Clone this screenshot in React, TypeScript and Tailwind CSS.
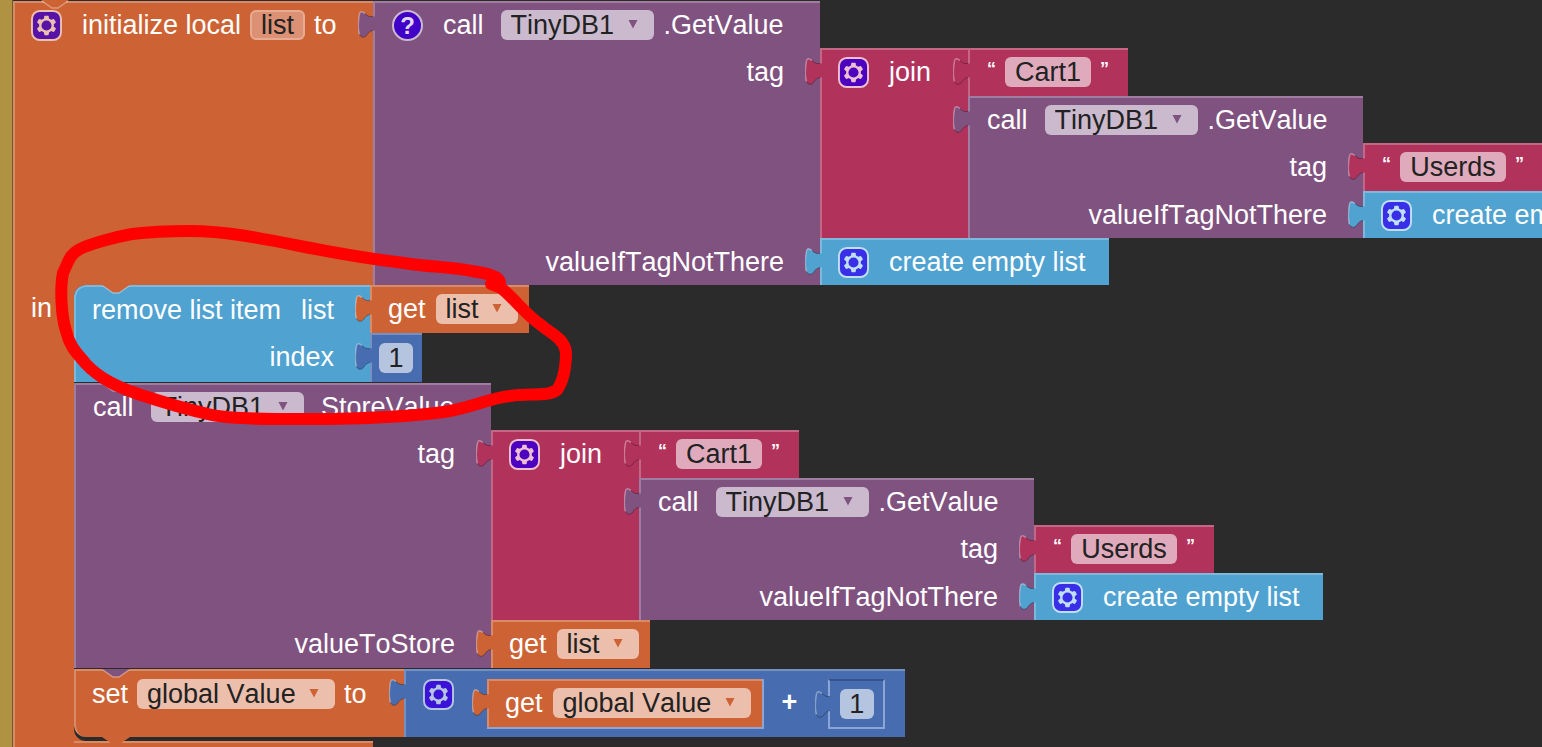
import React from "react";
import clsx from "clsx";

const GEAR =
  "m4.203,7.296 0,1.368 -0.92,0.677 -0.11,0.41 0.9,1.479 0.41,0.11 1.043,-0.457 1.187,0.683 0.127,1.134 0.3,0.3 1.71,0 0.3,-0.299 0.127,-1.138 1.185,-0.682 1.046,0.458 0.409,-0.11 0.9,-1.479 -0.11,-0.41 -0.92,-0.677 0,-1.366 0.92,-0.677 0.11,-0.41 -0.9,-1.479 -0.409,-0.109 -1.046,0.458 -1.185,-0.682 -0.127,-1.138 -0.3,-0.299 -1.71,0 -0.3,0.3 -0.126,1.135 -1.187,0.682 -1.043,-0.457 -0.41,0.11 -0.899,1.479 0.11,0.409z";

// Plug on the left side of a value block
const Tab = ({ className }: { className: string }) => (
  <svg
    viewBox="0 0 17 28"
    className={clsx("absolute top-[9px] -left-[15px] z-10 h-7 w-[17px]", className)}
  >
    <path
      d="M17 6.500H15C10 7 9 5 7 3.500C4 1 2 1 1.500 4C0 12 0 20 1.500 24.500C3 28 6 28 8.500 25.500C11 22 12 21 15 20.500H17z"
      fill="currentColor"
    />
    <path
      d="M7 3.500C4 1 2 1 1.500 4C0 12 0 20 1.500 24.500"
      fill="none"
      stroke="white"
      strokeOpacity="0.35"
      strokeWidth="1.500"
    />
    <path
      d="M1.500 24.500C3 28 6 28 8.500 25.500C11 22 12 21 15 20.500M7 3.500C9 5 10 7 15 6.500"
      fill="none"
      stroke="black"
      strokeOpacity="0.3"
    />
  </svg>
);

// Bump of the statement above, which fits in the top edge of a block
const Notch = ({ className }: { className: string }) => (
  <svg viewBox="0 0 28 9" className={clsx("absolute top-0 left-7 z-10 h-[9px] w-7", className)}>
    <path d="M0 0l11 7.500h6L28 0z" fill="currentColor" />
    <path
      d="M1 1l10 7h6l10-7"
      fill="none"
      stroke="white"
      strokeOpacity="0.35"
      strokeWidth="1.500"
    />
  </svg>
);

const Gear = ({ className, tint }: { className: string; tint: string }) => (
  <button aria-label="Edit block" className={clsx("h-[31px] w-[31px] shrink-0", tint)}>
    <svg viewBox="0 0 16 16" className="h-full w-full">
      <rect
        x="0.5"
        y="0.5"
        width="15"
        height="15"
        rx="4"
        className={className}
        stroke="currentColor"
        strokeWidth="1"
      />
      <path d={GEAR} fill="currentColor" />
      <circle cx="8" cy="8" r="2.600" className={className} />
    </svg>
  </button>
);

const Dropdown = ({
  value,
  className,
  arrow,
}: {
  value: string;
  className: string;
  arrow: string;
}) => (
  <div className="relative">
    <select
      aria-label={value}
      className={clsx(
        "block h-[30px] appearance-none rounded-md pl-[10px] leading-[30px] text-[#222]",
        className
      )}
    >
      <option>{value}</option>
    </select>
    <svg
      viewBox="0 0 10 9"
      className={clsx("pointer-events-none absolute top-[10px] right-4 h-[9px] w-[10px]", arrow)}
    >
      <path d="M0.500 0h9L5 8.500z" fill="currentColor" />
    </svg>
  </div>
);

const TextField = ({
  value,
  label,
  className,
}: {
  value: string;
  label: string;
  className: string;
}) => (
  <input
    aria-label={label}
    defaultValue={value}
    className={clsx("h-[30px] rounded-md text-center leading-[30px] text-[#222]", className)}
  />
);

const Text = ({ value, width }: { value: string; width: string }) => (
  <div className="relative flex h-12 w-max items-center gap-[9px] bg-[#b1335c] px-[19px] shadow-[inset_2px_2px_0_#ffffff40]">
    <Tab className="text-[#b1335c]" />
    <span className="pb-[6px] text-lg font-bold">“</span>
    <TextField value={value} label="text" className={clsx("bg-[#e0aabd]", width)} />
    <span className="pb-[6px] text-lg font-bold">”</span>
  </div>
);

const EmptyList = () => (
  <div className="relative flex h-[47px] w-[289px] items-center gap-5 bg-[#50a2d1] pt-px pl-[18px] whitespace-nowrap shadow-[inset_2px_2px_0_#ffffff40]">
    <Tab className="text-[#50a2d1]" />
    <Gear className="fill-[#3a2fe8]" tint="text-[#bfe0f2]" />
    <span>create empty list</span>
  </div>
);

const GetVar = ({ name, width }: { name: string; width: string }) => (
  <div className="relative flex h-12 w-max items-center gap-[10px] bg-[#cd6335] pr-[11px] pl-[18px] shadow-[inset_2px_2px_0_#ffffff40]">
    <Tab className="text-[#cd6335]" />
    <span>get</span>
    <Dropdown value={name} className={clsx("bg-[#ebbfac]", width)} arrow="text-[#cd6335]" />
  </div>
);

const Join = ({ children }: { children: React.ReactNode }) => (
  <div className="relative flex">
    <Tab className="text-[#b1335c]" />
    <div className="w-[148px] border-t-2 border-l-2 border-white/25 bg-[#b1335c] pl-4">
      <div className="flex h-11 items-center gap-5">
        <Gear className="fill-[#4d00bf]" tint="text-[#ecc0d0]" />
        <span>join</span>
      </div>
    </div>
    <div>{children}</div>
  </div>
);

type CallProps = {
  method: string;
  width: string;
  help?: boolean;
  tab?: boolean;
  inputs: { label: string; block: React.ReactNode }[];
};

const Call = ({ method, width, help, tab, inputs }: CallProps) => (
  <div className="relative">
    {tab && <Tab className="text-[#7f5280]" />}
    <div
      className={clsx(
        "flex h-[47px] items-center border-t-2 border-l-2 border-white/25 bg-[#7f5280] pb-px pl-[17px]",
        width
      )}
    >
      {help && (
        <button
          aria-label="Help"
          className="mr-5 h-[31px] w-[31px] rounded-full border-2 border-[#cbbacd] bg-[#4000c8] text-2xl leading-[27px] font-bold text-[#e0d8f0]"
        >
          ?
        </button>
      )}
      <span className="mr-[17px]">call</span>
      <Dropdown value="TinyDB1" className="w-[153px] bg-[#cbbacd]" arrow="text-[#7f5280]" />
      <span className="ml-[10px]">.{method}</span>
    </div>
    {inputs.map((input) => (
      <div key={input.label} className="flex">
        <div
          className={clsx(
            "shrink-0 border-l-2 border-white/25 bg-[#7f5280] pt-[2px] pr-[36px] text-right leading-[45px]",
            width
          )}
        >
          {input.label}
        </div>
        {input.block}
      </div>
    ))}
  </div>
);

const CartTag = () => (
  <Join>
    <Text value="Cart1" width="w-[86px]" />
    <Call
      tab
      method="GetValue"
      width="w-[395px]"
      inputs={[
        { label: "tag", block: <Text value="Userds" width="w-[106px]" /> },
        { label: "valueIfTagNotThere", block: <EmptyList /> },
      ]}
    />
  </Join>
);

const RemoveItem = () => (
  <div className="relative flex">
    <Notch className="text-[#cd6335]" />
    <div className="w-[296px] rounded-tl-xl border-t-2 border-l-2 border-white/25 bg-[#50a2d1] pr-[36px] pl-4 text-right">
      <p className="flex justify-between leading-[46px]">
        <span>remove list item</span>
        <span>list</span>
      </p>
      <p className="leading-[48px]">index</p>
    </div>
    <div>
      <GetVar name="list" width="w-[82px]" />
      <div className="relative flex h-[49px] w-[52px] items-center justify-center bg-[#476db0] shadow-[inset_2px_2px_0_#ffffff40]">
        <Tab className="text-[#476db0]" />
        <TextField value="1" label="index" className="w-[34px] bg-[#b5c5e0]" />
      </div>
    </div>
  </div>
);

const SetValue = () => (
  <div className="relative flex h-[68px]">
    <Notch className="text-[#7f5280]" />
    <div className="flex w-[330px] items-start gap-[9px] rounded-bl-xl border-t-2 border-l-2 border-white/25 bg-[#cd6335] pt-2 pl-4 leading-[30px]">
      <span>set</span>
      <Dropdown value="global Value" className="w-[198px] bg-[#ebbfac]" arrow="text-[#cd6335]" />
      <span>to</span>
    </div>
    <div className="relative flex w-[501px] items-start bg-[#476db0] pt-[10px] pl-[19px] shadow-[inset_2px_2px_0_#ffffff40]">
      <Tab className="text-[#476db0]" />
      <Gear className="fill-[#3a12d8]" tint="text-[#b5c5e0]" />
      <div className="ml-[33px] border-r-2 border-b-2 border-[#8ba6d4]">
        <GetVar name="global Value" width="w-[198px]" />
      </div>
      <span className="ml-[18px] leading-[46px] font-bold">+</span>
      <div className="relative ml-[31px] flex h-[50px] w-[57px] items-center justify-center border-2 border-t-[#35528a] border-r-[#8ba6d4] border-b-[#8ba6d4] border-l-[#8ba6d4]">
        <Tab className="text-[#476db0]" />
        <TextField value="1" label="number" className="w-[34px] bg-[#b5c5e0]" />
      </div>
    </div>
  </div>
);

// Freehand marker loop round the "remove list item" block
const Marker = () => (
  <svg
    viewBox="0 0 600 440"
    className="pointer-events-none absolute top-0 left-0 z-20 h-[440px] w-[600px]"
  >
    <path
      d="M491 284L500 282C499 276 485 273 472 271C450 267 430 267 404 263C370 259 330 252 300 246C260 238 225 231 190 231C165 231 148 232 132 234C115 237 90 244 80 249C68 255 67 266 63 273C60 288 61 315 66 331C70 348 78 354 86 364C100 379 118 387 138 394C165 403 190 410 212 415C235 420 290 419 330 419C375 418 420 416 450 411C475 406 488 399 510 396C530 393 548 397 557 390C564 380 566 365 566 352C564 338 550 333 541 325C525 314 515 299 501 288L491 284"
      fill="none"
      stroke="#ff0000"
      strokeWidth="12"
      strokeLinecap="round"
      strokeLinejoin="round"
    />
  </svg>
);

const App = () => {
  return (
    <main className="relative flex h-screen overflow-hidden bg-[#2b2b2b] font-['Liberation_Sans',Arial,sans-serif] text-[27px] text-white [font-kerning:none]">
      <div className="w-[13px] shrink-0 border-r border-[#6b5a2a] bg-[#b09342]" />
      <div className="flex min-w-0 flex-1 flex-col">
        <div className="relative flex pt-px">
          <Notch className="text-[#cd6335]" />
          <div className="w-[360px] shrink-0 border-t-2 border-l-2 border-white/25 bg-[#cd6335] pl-4">
            <div className="flex h-11 items-center">
              <Gear className="fill-[#5712a8]" tint="text-[#ecc0b0]" />
              <span className="ml-5">initialize local</span>
              <TextField
                value="list"
                label="local name"
                className="mx-[9px] w-[55px] border-2 border-[#e6ab92] bg-[#dd9174]"
              />
              <span>to</span>
            </div>
          </div>
          <Call
            tab
            help
            method="GetValue"
            width="w-[447px]"
            inputs={[
              { label: "tag", block: <CartTag /> },
              { label: "valueIfTagNotThere", block: <EmptyList /> },
            ]}
          />
        </div>
        <div className="relative flex">
          <div className="absolute inset-y-0 left-0 w-20 border-l-2 border-white/25 bg-[#cd6335]" />
          <p className="relative w-[61px] shrink-0 pl-[18px] leading-[46px]">in</p>
          <div className="relative flex flex-1 flex-col gap-px rounded-l-xl bg-[#2b2b2b] pb-1">
            <RemoveItem />
            <div className="relative">
              <Notch className="text-[#50a2d1]" />
              <Call
                method="StoreValue"
                width="w-[417px]"
                inputs={[
                  { label: "tag", block: <CartTag /> },
                  { label: "valueToStore", block: <GetVar name="list" width="w-[82px]" /> },
                ]}
              />
            </div>
            <SetValue />
          </div>
        </div>
        <div className="flex flex-1">
          <div className="w-[61px] border-l-2 border-white/25 bg-[#cd6335]" />
          <div className="relative w-[299px] border-t-2 border-white/25 bg-[#cd6335]">
            <svg viewBox="0 0 28 9" className="absolute -top-[6px] left-7 h-[9px] w-7">
              <path d="M0 0l11 7.500h6L28 0z" fill="#cd6335" />
            </svg>
          </div>
        </div>
      </div>
      <Marker />
    </main>
  );
};

export default App;
